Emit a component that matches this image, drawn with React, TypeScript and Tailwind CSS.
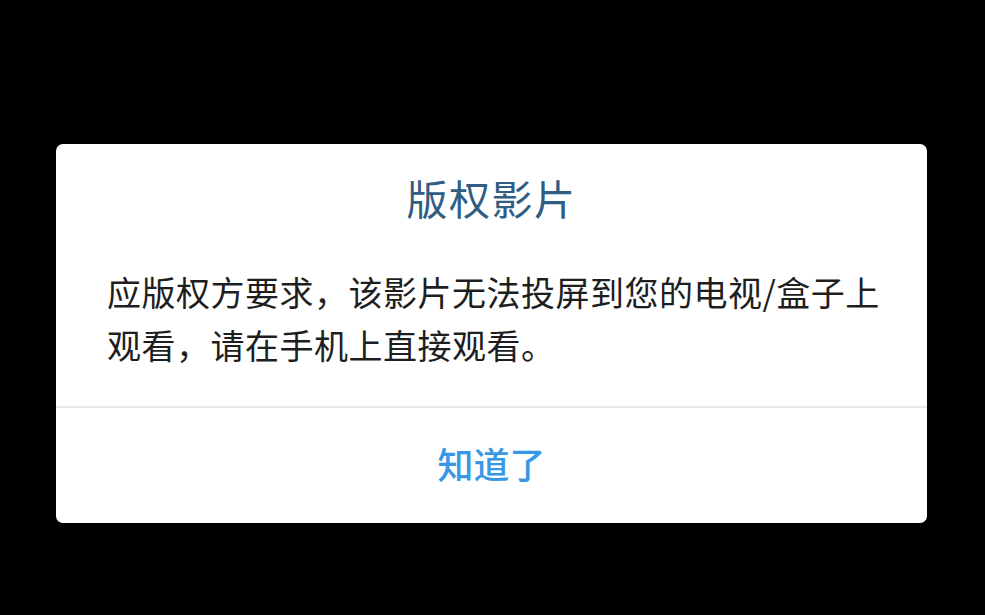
export default function App() {
  return (
    <div
      className="w-[985px] h-[615px] bg-black pt-[144px]"
      style={{ fontFamily: '"Noto Sans CJK SC", "Noto Sans", sans-serif' }}
    >
      <div className="ml-[56px] w-[871px] h-[379px] bg-white rounded-[7px] flex flex-col">
        <div className="pt-[33px] text-center text-[41px] leading-[40px] tracking-[1.5px] text-[#2f5d84]">
          版权影片
        </div>
        <div className="pt-[48px] pb-[35px] px-[51px] text-[34px] leading-[53px] tracking-[0.5px] text-[#1e1e1e] whitespace-nowrap">
          应版权方要求，该影片无法投屏到您的电视/盒子上
          <br />
          观看，请在手机上直接观看。
        </div>
        <div className="h-[2px] bg-[#e3ebf1]" />
        <div className="flex-1 flex items-center justify-center pb-[6px] text-[36px] font-medium text-[#3898e6]">
          知道了
        </div>
      </div>
    </div>
  );
}
